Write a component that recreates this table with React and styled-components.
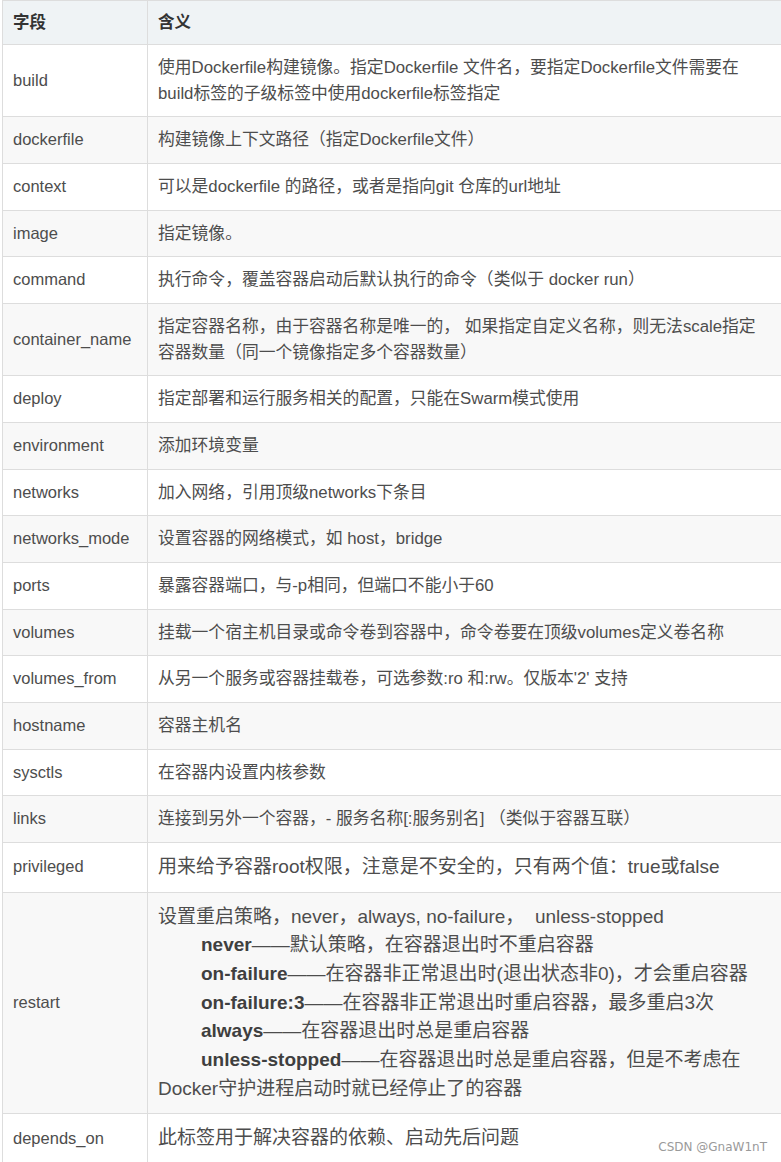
import React from 'react';
import styled, { createGlobalStyle } from 'styled-components';

const GlobalStyle = createGlobalStyle`
  html, body {
    margin: 0;
    padding: 0;
    background: #ffffff;
    overflow: hidden;
  }
  body {
    font-family: "Liberation Sans", "Noto Sans CJK SC", sans-serif;
    color: #4d4d4d;
  }
`;

const rows = [
  { key: 'build', lines: ['使用Dockerfile构建镜像。指定Dockerfile 文件名，要指定Dockerfile文件需要在', 'build标签的子级标签中使用dockerfile标签指定'] },
  { key: 'dockerfile', lines: ['构建镜像上下文路径（指定Dockerfile文件）'] },
  { key: 'context', lines: ['可以是dockerfile 的路径，或者是指向git 仓库的url地址'] },
  { key: 'image', lines: ['指定镜像。'] },
  { key: 'command', lines: ['执行命令，覆盖容器启动后默认执行的命令（类似于 docker run）'] },
  { key: 'container_name', lines: ['指定容器名称，由于容器名称是唯一的， 如果指定自定义名称，则无法scale指定', '容器数量（同一个镜像指定多个容器数量）'] },
  { key: 'deploy', lines: ['指定部署和运行服务相关的配置，只能在Swarm模式使用'] },
  { key: 'environment', lines: ['添加环境变量'] },
  { key: 'networks', lines: ['加入网络，引用顶级networks下条目'] },
  { key: 'networks_mode', lines: ['设置容器的网络模式，如 host，bridge'] },
  { key: 'ports', lines: ['暴露容器端口，与-p相同，但端口不能小于60'] },
  { key: 'volumes', lines: ['挂载一个宿主机目录或命令卷到容器中，命令卷要在顶级volumes定义卷名称'] },
  { key: 'volumes_from', lines: ['从另一个服务或容器挂载卷，可选参数:ro 和:rw。仅版本\'2\' 支持'] },
  { key: 'hostname', lines: ['容器主机名'] },
  { key: 'sysctls', lines: ['在容器内设置内核参数'] },
  { key: 'links', lines: ['连接到另外一个容器，- 服务名称[:服务别名] （类似于容器互联）'] },
  { key: 'privileged', large: true, lines: ['用来给予容器root权限，注意是不安全的，只有两个值：true或false'] },
];

const restartPolicies = [
  ['never', '默认策略，在容器退出时不重启容器'],
  ['on-failure', '在容器非正常退出时(退出状态非0)，才会重启容器'],
  ['on-failure:3', '在容器非正常退出时重启容器，最多重启3次'],
  ['always', '在容器退出时总是重启容器'],
  ['unless-stopped', '在容器退出时总是重启容器，但是不考虑在'],
];

const App = () => (
  <Page>
    <GlobalStyle />
    <Table>
      <colgroup>
        <col style={{ width: 145 }} />
        <col />
      </colgroup>
      <thead>
        <tr>
          <HeadCell>字段</HeadCell>
          <HeadCell>含义</HeadCell>
        </tr>
      </thead>
      <tbody>
        {rows.map((row, i) => (
          <Row key={row.key} $striped={i % 2 === 1}>
            <Cell>{row.key}</Cell>
            <Cell $large={row.large} $wide>
              {row.lines.map((line, j) => (
                <Line key={j}>{line}</Line>
              ))}
            </Cell>
          </Row>
        ))}
        <Row $striped>
          <Cell>restart</Cell>
          <Cell $large $wide>
            <Line>设置重启策略，never，always, no-failure， &nbsp;unless-stopped</Line>
            {restartPolicies.map(([name, desc]) => (
              <Line key={name} $indent>
                <strong>{name}</strong>——{desc}
              </Line>
            ))}
            <Line>Docker守护进程启动时就已经停止了的容器</Line>
          </Cell>
        </Row>
        <Row>
          <Cell>depends_on</Cell>
          <Cell $large $wide>
            <Line>此标签用于解决容器的依赖、启动先后问题</Line>
          </Cell>
        </Row>
      </tbody>
    </Table>
    <Watermark>CSDN @GnaW1nT</Watermark>
  </Page>
);

const Page = styled.div`
  position: relative;
  width: 781px;
  height: 1162px;
  padding-left: 2px;
  box-sizing: border-box;
  overflow: hidden;
`;

const Table = styled.table`
  border-collapse: collapse;
  width: 840px;
  table-layout: fixed;
  font-size: 16px;
`;

const HeadCell = styled.th`
  background: #eff3f5;
  color: #333333;
  font-weight: bold;
  font-size: 16.5px;
  text-align: left;
  padding: 10px 10px;
  line-height: 23px;
  border: 1px solid #dddddd;
`;

const Row = styled.tr`
  background: ${p => (p.$striped ? '#f8f8f8' : '#ffffff')};
`;

const Cell = styled.td`
  padding: 10px 10px;
  border: 1px solid #dddddd;
  vertical-align: middle;
  white-space: nowrap;
  font-size: ${p => (p.$large ? '19px' : p.$wide ? '16.8px' : '16.5px')};
  line-height: ${p => (p.$large ? '28.7px' : '25.65px')};
`;

const Line = styled.div`
  padding-left: ${p => (p.$indent ? '43px' : '0')};

  strong {
    color: #3f3f3f;
  }
`;

const Watermark = styled.div`
  position: absolute;
  right: 14px;
  bottom: 8px;
  font-size: 12px;
  color: #9a9a9a;
  font-family: "DejaVu Sans", sans-serif;
`;

export default App;
